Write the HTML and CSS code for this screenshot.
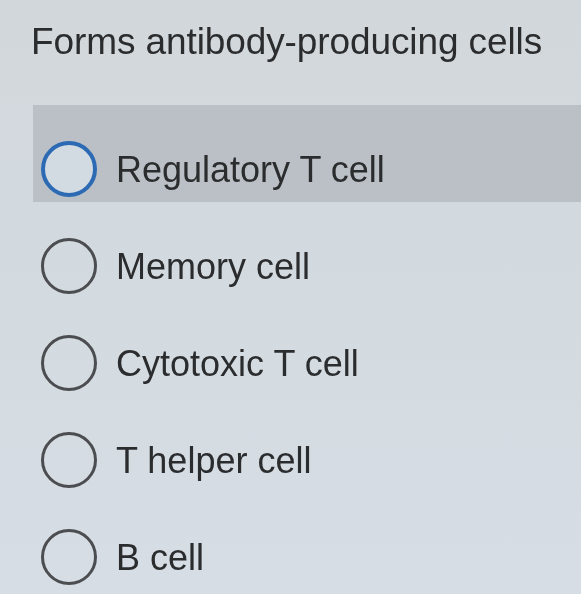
FILE: index.html
```html
<!DOCTYPE html>
<html lang="en">
<head>
<meta charset="utf-8">
<title>Question</title>
<link rel="stylesheet" href="styles.css">
</head>
<body>
<main class="question">
  <h1 class="prompt">Forms antibody-producing cells</h1>
  <ul class="options">
    <li class="option option--focused"><span class="radio radio--focused"></span><span class="label">Regulatory T cell</span></li>
    <li class="option"><span class="radio"></span><span class="label">Memory cell</span></li>
    <li class="option"><span class="radio"></span><span class="label">Cytotoxic T cell</span></li>
    <li class="option"><span class="radio"></span><span class="label">T helper cell</span></li>
    <li class="option"><span class="radio"></span><span class="label">B cell</span></li>
  </ul>
</main>
</body>
</html>
```

FILE: styles.css
```css
html, body {
  margin: 0;
  padding: 0;
  height: 100%;
}
body {
  background: linear-gradient(180deg, #d2d7db 0%, #d3dadf 40%, #d6dde4 100%);
  font-family: "Liberation Sans", Arial, sans-serif;
  color: #2b2c2e;
  overflow: hidden;
}
.question {
  padding: 22px 0 0 31px;
  filter: blur(0.5px);
}
.prompt {
  margin: 0;
  font-size: 37px;
  font-weight: normal;
  line-height: 40px;
  letter-spacing: -0.1px;
}
.options {
  list-style: none;
  margin: 43px 0 0 2px;
  padding: 0;
}
.option {
  display: flex;
  align-items: center;
  gap: 19px;
  height: 56px;
  padding: 36px 0 5px 8px;
}
.option--focused {
  background: #bac0c5;
}
.radio {
  box-sizing: border-box;
  width: 56px;
  height: 56px;
  border-radius: 50%;
  border: 3px solid #4c4d50;
  flex: none;
}
.radio--focused {
  border: 4px solid #2c6ab4;
  background: #d3dbe2;
}
.label {
  font-size: 36px;
  line-height: 40px;
  position: relative;
  top: 1px;
}
```
